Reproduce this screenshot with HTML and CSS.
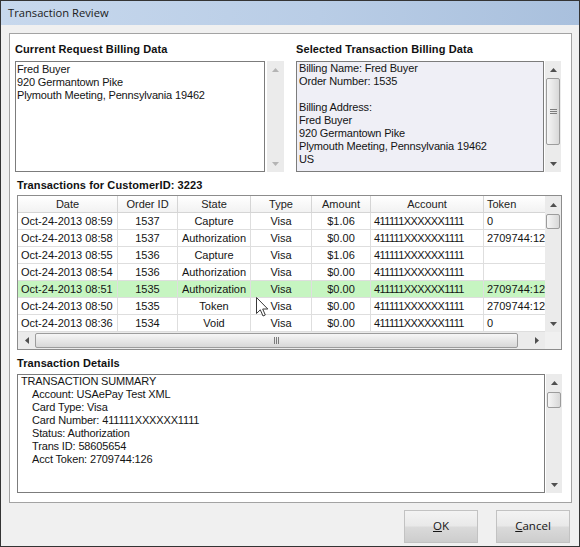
FILE: index.html
```html
<!DOCTYPE html>
<html>
<head>
<meta charset="utf-8">
<title>Transaction Review</title>
<link rel="stylesheet" href="styles.css">
</head>
<body>
<div class="window">
  <div class="titlebar">Transaction Review</div>
  <div class="client">
    <div class="panel">
      <div class="toprow">
        <div class="field">
          <div class="label">Current Request Billing Data</div>
          <div class="boxrow boxrow1">
            <div class="textbox">
              <div>Fred Buyer</div>
              <div>920 Germantown Pike</div>
              <div>Plymouth Meeting, Pennsylvania 19462</div>
            </div>
            <div class="vscroll disabled">
              <div class="sbtn"><svg class="arrow" width="7" height="4" viewBox="0 0 7 4"><path d="M0 4L3.5 0L7 4Z"/></svg></div>
              <div class="track"></div>
              <div class="sbtn"><svg class="arrow" width="7" height="4" viewBox="0 0 7 4"><path d="M0 0L3.5 4L7 0Z"/></svg></div>
            </div>
          </div>
        </div>
        <div class="field">
          <div class="label">Selected Transaction Billing Data</div>
          <div class="boxrow boxrow2">
            <div class="textbox selected">
              <div>Billing Name: Fred Buyer</div>
              <div>Order Number: 1535</div>
              <div class="blank"></div>
              <div>Billing Address:</div>
              <div>Fred Buyer</div>
              <div>920 Germantown Pike</div>
              <div>Plymouth Meeting, Pennsylvania 19462</div>
              <div>US</div>
            </div>
            <div class="vscroll">
              <div class="sbtn"><svg class="arrow" width="7" height="4" viewBox="0 0 7 4"><path d="M0 4L3.5 0L7 4Z"/></svg></div>
              <div class="track">
                <div class="thumb-v thumb-big"><span class="grip-v"></span></div>
              </div>
              <div class="sbtn"><svg class="arrow" width="7" height="4" viewBox="0 0 7 4"><path d="M0 0L3.5 4L7 0Z"/></svg></div>
            </div>
          </div>
        </div>
      </div>

      <div class="label section-label">Transactions for CustomerID: 3223</div>
      <div class="table">
        <div class="rows">
          <div class="tr thead">
            <div class="td">Date</div>
            <div class="td">Order ID</div>
            <div class="td">State</div>
            <div class="td">Type</div>
            <div class="td">Amount</div>
            <div class="td">Account</div>
            <div class="td l last">Token</div>
          </div>
          <div class="tr">
            <div class="td l">Oct-24-2013 08:59</div><div class="td">1537</div><div class="td">Capture</div><div class="td">Visa</div><div class="td">$1.06</div><div class="td l acct">411111XXXXXX1111</div><div class="td l last">0</div>
          </div>
          <div class="tr">
            <div class="td l">Oct-24-2013 08:58</div><div class="td">1537</div><div class="td">Authorization</div><div class="td">Visa</div><div class="td">$0.00</div><div class="td l acct">411111XXXXXX1111</div><div class="td l last">2709744:126</div>
          </div>
          <div class="tr">
            <div class="td l">Oct-24-2013 08:55</div><div class="td">1536</div><div class="td">Capture</div><div class="td">Visa</div><div class="td">$1.06</div><div class="td l acct">411111XXXXXX1111</div><div class="td l last"></div>
          </div>
          <div class="tr">
            <div class="td l">Oct-24-2013 08:54</div><div class="td">1536</div><div class="td">Authorization</div><div class="td">Visa</div><div class="td">$0.00</div><div class="td l acct">411111XXXXXX1111</div><div class="td l last"></div>
          </div>
          <div class="tr sel">
            <div class="td l">Oct-24-2013 08:51</div><div class="td">1535</div><div class="td">Authorization</div><div class="td">Visa</div><div class="td">$0.00</div><div class="td l acct">411111XXXXXX1111</div><div class="td l last">2709744:126</div>
          </div>
          <div class="tr">
            <div class="td l">Oct-24-2013 08:50</div><div class="td">1535</div><div class="td">Token</div><div class="td">Visa</div><div class="td">$0.00</div><div class="td l acct">411111XXXXXX1111</div><div class="td l last">2709744:126</div>
          </div>
          <div class="tr">
            <div class="td l">Oct-24-2013 08:36</div><div class="td">1534</div><div class="td">Void</div><div class="td">Visa</div><div class="td">$0.00</div><div class="td l acct">411111XXXXXX1111</div><div class="td l last">0</div>
          </div>
        </div>
        <div class="vscroll">
          <div class="sbtn"><svg class="arrow" width="7" height="4" viewBox="0 0 7 4"><path d="M0 4L3.5 0L7 4Z"/></svg></div>
          <div class="track">
            <div class="thumb-v thumb-small"></div>
          </div>
          <div class="sbtn"><svg class="arrow" width="7" height="4" viewBox="0 0 7 4"><path d="M0 0L3.5 4L7 0Z"/></svg></div>
        </div>
        <div class="hscroll">
          <div class="sbtn-h"><svg class="arrow" width="4" height="7" viewBox="0 0 4 7"><path d="M4 0L0 3.5L4 7Z"/></svg></div>
          <div class="htrack">
            <div class="thumb-h"><span class="grip-h"></span></div>
          </div>
          <div class="sbtn-h"><svg class="arrow" width="4" height="7" viewBox="0 0 4 7"><path d="M0 0L4 3.5L0 7Z"/></svg></div>
        </div>
        <div class="corner"></div>
      </div>

      <div class="label details-label">Transaction Details</div>
      <div class="detailsrow">
        <div class="textbox details">
          <div>TRANSACTION SUMMARY</div>
          <div class="ind">Account: USAePay Test XML</div>
          <div class="ind">Card Type: Visa</div>
          <div class="ind">Card Number: 411111XXXXXX1111</div>
          <div class="ind">Status: Authorization</div>
          <div class="ind">Trans ID: 58605654</div>
          <div class="ind">Acct Token: 2709744:126</div>
        </div>
        <div class="vscroll">
          <div class="sbtn"><svg class="arrow" width="7" height="4" viewBox="0 0 7 4"><path d="M0 4L3.5 0L7 4Z"/></svg></div>
          <div class="track">
            <div class="thumb-v thumb-det"></div>
          </div>
          <div class="sbtn"><svg class="arrow" width="7" height="4" viewBox="0 0 7 4"><path d="M0 0L3.5 4L7 0Z"/></svg></div>
        </div>
      </div>
    </div>

    <div class="buttons">
      <div class="btn"><span><u>O</u>K</span></div>
      <div class="btn"><span><u>C</u>ancel</span></div>
    </div>
  </div>

  <svg class="cursor" width="13" height="21" viewBox="0 0 13 21">
    <path d="M0.5 0.5L0.5 16.5L4.3 12.8L7 19L9.3 18L6.7 12L11.8 12Z" fill="#ffffff" stroke="#3a3a3a" stroke-width="1" stroke-linejoin="round"/>
  </svg>
</div>
</body>
</html>
```

FILE: styles.css
```css
body {
  margin: 0;
  background: #ffffff;
}

.window {
  position: relative;
  width: 580px;
  height: 547px;
  box-sizing: border-box;
  border: 1px solid #343434;
  display: flex;
  flex-direction: column;
  font-family: "Liberation Sans", Arial, sans-serif;
  font-size: 11px;
  color: #141414;
  background: #f0f0f0;
  overflow: hidden;
}

.titlebar {
  flex: none;
  height: 24px;
  line-height: 24px;
  padding-left: 7px;
  font-family: "Open Sans", "Noto Sans", sans-serif;
  font-size: 11.2px;
  color: #1b1b1b;
  background: linear-gradient(to right, #c7d8ed, #b9cde6 55%, #a9c0dd);
}

.client {
  flex: 1;
  display: flex;
  flex-direction: column;
  padding: 8px 7px 0 8px;
}

.panel {
  flex: none;
  height: 470px;
  box-sizing: border-box;
  border: 1px solid #a3a3a3;
  background: #ffffff;
  padding: 8px 0 0 5px;
}

.label {
  font-weight: bold;
  height: 14px;
  line-height: 14px;
  letter-spacing: 0.1px;
  white-space: nowrap;
  color: #111;
}

.toprow {
  display: grid;
  grid-template-columns: 269px 265px;
  column-gap: 12px;
}

.toprow .label {
  margin-bottom: 5px;
}

.boxrow {
  display: grid;
  height: 111px;
}

.boxrow1 {
  grid-template-columns: 250px 17px;
  column-gap: 2px;
}

.boxrow2 {
  grid-template-columns: 248px 16px;
  column-gap: 1px;
}

.textbox {
  box-sizing: border-box;
  border: 1px solid #7c7c7c;
  background: #ffffff;
  line-height: 13px;
  letter-spacing: -0.15px;
  padding: 1px 0 0 1px;
  overflow: hidden;
  white-space: nowrap;
}

.textbox.selected {
  background: #efeff6;
  padding: 0 0 0 2px;
}

.blank {
  height: 13px;
}

.vscroll {
  display: flex;
  flex-direction: column;
  background: #ebebeb;
}

.sbtn {
  flex: none;
  height: 17px;
  display: flex;
  align-items: center;
  justify-content: center;
}

.track {
  flex: 1;
}

.arrow {
  display: block;
  fill: #4f4f4f;
}

.disabled .arrow {
  fill: #b4b4b4;
}

.thumb-v {
  box-sizing: border-box;
  margin: 0 1px;
  border: 1px solid #9c9c9c;
  border-radius: 2px;
  background: linear-gradient(to right, #f6f6f6, #e7e7e7 50%, #d8d8d8);
  display: flex;
  align-items: center;
  justify-content: center;
}

.thumb-big {
  height: 67px;
}

.thumb-small {
  margin-top: 1px;
  height: 15px;
}

.thumb-det {
  margin-top: 1px;
  height: 16px;
}

.grip-v {
  width: 7px;
  height: 5px;
  background: repeating-linear-gradient(to bottom, #7c7c7c 0 1px, transparent 1px 2px);
}

.section-label {
  margin: 6px 0 3px 2px;
}

.details-label {
  margin: 6px 0 4px 2px;
}

.table {
  margin-left: 2px;
  width: 545px;
  height: 155px;
  box-sizing: border-box;
  border: 1px solid #8c8c8c;
  display: grid;
  grid-template-columns: 1fr 16px;
  grid-template-rows: 136px 17px;
}

.rows {
  overflow: hidden;
  background: #ffffff;
}

.tr {
  display: grid;
  grid-template-columns: 100px 60px 73px 61px 59px 113px 61px;
  height: 17px;
  box-sizing: border-box;
  border-bottom: 1px solid #dedede;
}

.td {
  box-sizing: border-box;
  border-right: 1px solid #dedede;
  line-height: 16px;
  overflow: hidden;
  white-space: nowrap;
  text-align: center;
  padding: 0 1px;
}

.td.l {
  text-align: left;
  padding-left: 3px;
}

.td.last {
  border-right: none;
}

.acct {
  letter-spacing: -0.6px;
}

.thead {
  background: linear-gradient(#ffffff, #f2f2f2);
  border-bottom-color: #d5d5d5;
}

.thead .td {
  border-right-color: #d5d5d5;
  color: #222;
}

.tr.sel {
  background: #c6f5c1;
}

.hscroll {
  display: flex;
  background: #ebebeb;
}

.sbtn-h {
  flex: none;
  width: 17px;
  display: flex;
  align-items: center;
  justify-content: center;
}

.htrack {
  flex: 1;
  display: flex;
  padding: 1px 0;
}

.thumb-h {
  width: 483px;
  box-sizing: border-box;
  border: 1px solid #9c9c9c;
  border-radius: 2px;
  background: linear-gradient(to bottom, #f6f6f6, #e7e7e7 50%, #d8d8d8);
  display: flex;
  align-items: center;
  justify-content: center;
}

.grip-h {
  width: 5px;
  height: 7px;
  background: repeating-linear-gradient(to right, #7c7c7c 0 1px, transparent 1px 2px);
}

.corner {
  background: #f0f0f0;
}

.detailsrow {
  margin-left: 2px;
  display: grid;
  grid-template-columns: 528px 16px;
  column-gap: 1px;
  height: 119px;
}

.textbox.details {
  padding: 0 0 0 3px;
}

.ind {
  padding-left: 11px;
}

.buttons {
  display: flex;
  justify-content: flex-end;
  gap: 18px;
  margin-top: 7px;
  padding-right: 2px;
}

.btn {
  width: 74px;
  height: 33px;
  box-sizing: border-box;
  border: 1px solid #c2c2c2;
  background: linear-gradient(#f3f3f3, #e9e9e9 48%, #dadada 52%, #cdcdcd);
  display: flex;
  align-items: center;
  justify-content: center;
  font-family: "Open Sans", "Noto Sans", sans-serif;
  font-size: 11.5px;
  color: #151515;
  padding-bottom: 3px;
}

.cursor {
  position: absolute;
  left: 255px;
  top: 296px;
}
```
